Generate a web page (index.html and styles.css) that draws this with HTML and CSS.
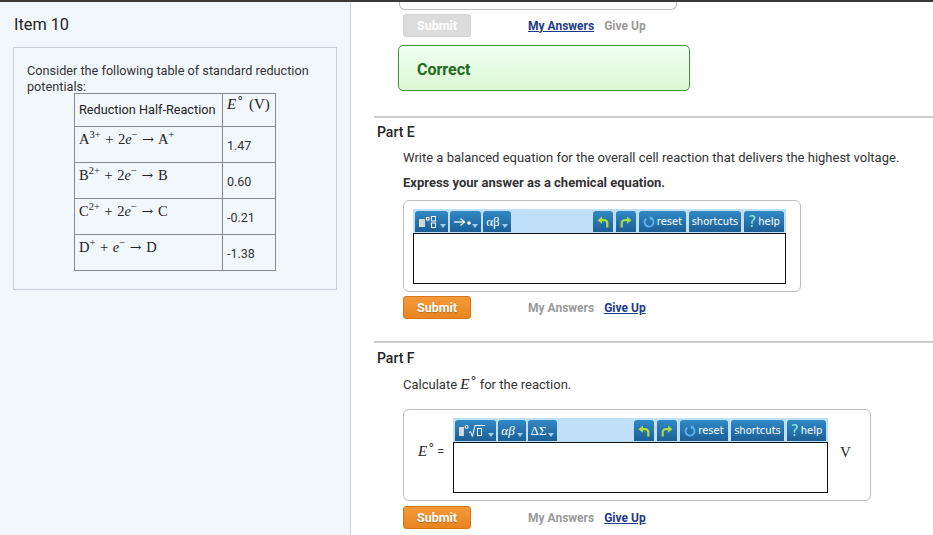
FILE: index.html
```html
<!DOCTYPE html>
<html lang="en">
<head>
  <meta charset="UTF-8">
  <title>Item 10</title>
  <link rel="stylesheet" href="styles.css">
</head>
<body>
  <div class="topbar"></div>
  <div class="page">
    <aside class="sidebar">
      <h1 class="item-title">Item 10</h1>
      <div class="intro">
        <p>Consider the following table of standard reduction potentials:</p>
        <table class="potentials">
          <tr class="head">
            <td>Reduction Half-Reaction</td>
            <td class="math"><i>E</i><sup class="deg">°</sup> (V)</td>
          </tr>
          <tr>
            <td class="math">A<sup>3+</sup> + 2<i>e</i><sup>−</sup> <span class="arr">→</span> A<sup>+</sup></td>
            <td class="val">1.47</td>
          </tr>
          <tr>
            <td class="math">B<sup>2+</sup> + 2<i>e</i><sup>−</sup> <span class="arr">→</span> B</td>
            <td class="val">0.60</td>
          </tr>
          <tr>
            <td class="math">C<sup>2+</sup> + 2<i>e</i><sup>−</sup> <span class="arr">→</span> C</td>
            <td class="val">-0.21</td>
          </tr>
          <tr>
            <td class="math">D<sup>+</sup> + <i>e</i><sup>−</sup> <span class="arr">→</span> D</td>
            <td class="val">-1.38</td>
          </tr>
        </table>
      </div>
    </aside>

    <main class="main">
      <div class="prev-box"></div>
      <div class="actions">
        <button class="submit disabled">Submit</button>
        <a class="link strong" href="#">My Answers</a>
        <span class="link muted">Give Up</span>
      </div>
      <div class="feedback">Correct</div>

      <section class="part">
        <h2>Part E</h2>
        <div class="part-body">
          <p class="prompt">Write a balanced equation for the overall cell reaction that delivers the highest voltage.</p>
          <p class="prompt bold">Express your answer as a chemical equation.</p>
          <div class="editor">
            <div class="field wide-e">
              <div class="toolbar">
                <div class="tb-group">
                  <span class="tb-btn w33">
                    <svg width="20" height="14" viewBox="0 0 20 14"><rect x="1" y="4" width="6" height="8" fill="#d6d6d6"/><rect x="8.5" y="2.5" width="2.5" height="2.5" fill="none" stroke="#fff"/><rect x="13.5" y="1.5" width="4" height="4.5" fill="none" stroke="#fff"/><rect x="13.5" y="8" width="4" height="4.5" fill="none" stroke="#fff"/></svg>
                    <span class="caret"></span>
                  </span>
                  <span class="tb-btn w31">
                    <svg width="20" height="12" viewBox="0 0 20 12"><path d="M1 6H11" stroke="#fff" stroke-width="1.3"/><path d="M7.5 2.5L11.5 6L7.5 9.5" fill="none" stroke="#fff" stroke-width="1.3"/><circle cx="16" cy="7" r="1.8" fill="#fff"/></svg>
                    <span class="caret"></span>
                  </span>
                  <span class="tb-btn w28"><span class="greek">αβ</span><span class="caret"></span></span>
                </div>
                <div class="tb-group">
                  <span class="tb-btn w20">
                    <svg width="12" height="12" viewBox="0 0 12 12"><path d="M4 4.2H7.3A3 3 0 0 1 10.3 7.2V11.5" fill="none" stroke="#b8dc3a" stroke-width="2.2"/><path d="M0.5 4.2L5 0.6V7.8Z" fill="#b8dc3a"/></svg>
                  </span>
                  <span class="tb-btn w20">
                    <svg width="12" height="12" viewBox="0 0 12 12"><g transform="translate(12 0) scale(-1 1)"><path d="M4 4.2H7.3A3 3 0 0 1 10.3 7.2V11.5" fill="none" stroke="#a6d84a" stroke-width="2.2"/><path d="M0.5 4.2L5 0.6V7.8Z" fill="#a6d84a"/></g></svg>
                  </span>
                  <span class="tb-btn w47">
                    <svg width="12" height="12" viewBox="0 0 12 12"><path d="M3.2 2.6A4.5 4.5 0 1 0 8.6 2.4" fill="none" stroke="#5cb4f4" stroke-width="1.8"/><path d="M6.4 0.3L10.2 1.6L7.4 4.8Z" fill="#5cb4f4"/></svg>
                    <span>reset</span>
                  </span>
                  <span class="tb-btn w52"><span>shortcuts</span></span>
                  <span class="tb-btn w40"><span class="qmark">?</span><span>help</span></span>
                </div>
              </div>
              <div class="input"></div>
            </div>
          </div>
          <div class="actions">
            <button class="submit">Submit</button>
            <span class="link muted">My Answers</span>
            <a class="link strong" href="#">Give Up</a>
          </div>
        </div>
      </section>

      <section class="part">
        <h2>Part F</h2>
        <div class="part-body">
          <p class="prompt">Calculate <span class="math"><i>E</i><sup class="deg">°</sup></span> for the reaction.</p>
          <div class="editor row">
            <div class="eq-label"><span class="math"><i>E</i><sup class="deg">°</sup></span> =</div>
            <div class="field wide-f">
              <div class="toolbar">
                <div class="tb-group">
                  <span class="tb-btn w41">
                    <svg width="28" height="14" viewBox="0 0 28 14"><rect x="1" y="3" width="5" height="9" fill="#d6d6d6"/><circle cx="8.6" cy="3" r="1.5" fill="none" stroke="#fff" stroke-width="1"/><path d="M11 8.5L12.6 7.6L14.4 12.5L17 1.5H27" fill="none" stroke="#fff" stroke-width="1"/><rect x="19.5" y="4.5" width="4" height="7" fill="none" stroke="#fff"/></svg>
                    <span class="caret"></span>
                  </span>
                  <span class="tb-btn w28"><span class="greek it">αβ</span><span class="caret"></span></span>
                  <span class="tb-btn w29"><span class="greek">ΔΣ</span><span class="caret"></span></span>
                </div>
                <div class="tb-group">
                  <span class="tb-btn w20">
                    <svg width="12" height="12" viewBox="0 0 12 12"><path d="M4 4.2H7.3A3 3 0 0 1 10.3 7.2V11.5" fill="none" stroke="#b8dc3a" stroke-width="2.2"/><path d="M0.5 4.2L5 0.6V7.8Z" fill="#b8dc3a"/></svg>
                  </span>
                  <span class="tb-btn w20">
                    <svg width="12" height="12" viewBox="0 0 12 12"><g transform="translate(12 0) scale(-1 1)"><path d="M4 4.2H7.3A3 3 0 0 1 10.3 7.2V11.5" fill="none" stroke="#a6d84a" stroke-width="2.2"/><path d="M0.5 4.2L5 0.6V7.8Z" fill="#a6d84a"/></g></svg>
                  </span>
                  <span class="tb-btn w48">
                    <svg width="12" height="12" viewBox="0 0 12 12"><path d="M3.2 2.6A4.5 4.5 0 1 0 8.6 2.4" fill="none" stroke="#5cb4f4" stroke-width="1.8"/><path d="M6.4 0.3L10.2 1.6L7.4 4.8Z" fill="#5cb4f4"/></svg>
                    <span>reset</span>
                  </span>
                  <span class="tb-btn w53"><span>shortcuts</span></span>
                  <span class="tb-btn w39"><span class="qmark">?</span><span>help</span></span>
                </div>
              </div>
              <div class="input"></div>
            </div>
            <div class="unit math">V</div>
          </div>
          <div class="actions">
            <button class="submit">Submit</button>
            <span class="link muted">My Answers</span>
            <a class="link strong" href="#">Give Up</a>
          </div>
        </div>
      </section>
    </main>
  </div>
</body>
</html>
```

FILE: styles.css
```css
* {
  margin: 0;
  padding: 0;
  box-sizing: border-box;
}

body {
  width: 933px;
  height: 535px;
  overflow: hidden;
  background: #fff;
  font-family: Roboto, 'Liberation Sans', Arial, sans-serif;
  color: #333;
}

.topbar {
  height: 2px;
  background: #3a3a3a;
}

.page {
  display: flex;
  height: 533px;
}

/* left column */

.sidebar {
  width: 351px;
  flex: none;
  background: #f2f7fc;
  border-right: 1px solid #c9d5e1;
}

.item-title {
  margin: 13px 0 0 14px;
  font-size: 16.3px;
  line-height: 20px;
  font-weight: 400;
  color: #222;
}

.intro {
  width: 324px;
  margin: 12px 0 0 13px;
  padding: 15px 13px 18px;
  border: 1px solid #c7d0da;
  font-size: 12.7px;
  line-height: 15.5px;
}

.potentials {
  margin: -1px auto 0;
  border-collapse: collapse;
  border: 1px solid #222;
  background: #f2f7fc;
}

.potentials td {
  border: 1px solid #8a8a8a;
  height: 36px;
  padding: 0 4px;
  vertical-align: top;
}

.potentials td:first-child {
  width: 148px;
}

.potentials td:last-child {
  width: 53px;
}

.potentials .head td {
  height: 33px;
  vertical-align: middle;
  font-size: 12.7px;
  color: #222;
}

.potentials .head td.math {
  vertical-align: top;
  padding-top: 3px;
  font-size: 15px;
  word-spacing: 2px;
}

.math {
  font-family: 'Liberation Serif', 'DejaVu Serif', serif;
  font-size: 14px;
  color: #222;
}

.potentials td.math {
  padding-top: 5px;
  font-size: 14.5px;
  word-spacing: 1px;
}

.math sup {
  font-size: 10.5px;
  line-height: 0;
  vertical-align: 6px;
}

.math sup.deg {
  font-family: 'DejaVu Sans', sans-serif;
  font-size: 12px;
  vertical-align: 4px;
  margin-left: 1px;
}

.arr {
  font-family: 'DejaVu Serif', serif;
  font-size: 14px;
}

.potentials td.val {
  padding-top: 11px;
  font-size: 12.5px;
  color: #333;
}

/* right column */

.main {
  flex: 1;
  padding-left: 23px;
}

.prev-box {
  width: 278px;
  height: 8px;
  margin-left: 25px;
  border: 1px solid #bdbdbd;
  border-top: none;
  border-radius: 0 0 6px 6px;
}

.actions {
  display: flex;
  align-items: center;
  margin: 4px 0 0 29px;
  height: 23px;
}

.part-body .actions {
  margin-left: 0;
}

.submit {
  width: 68px;
  height: 23px;
  border: 1px solid #d7751b;
  border-radius: 3px;
  background: linear-gradient(#f49a38, #ea8520);
  color: #fff;
  font-family: Roboto, 'Liberation Sans', sans-serif;
  font-size: 12.5px;
  font-weight: 700;
  text-shadow: 0 1px 1px rgba(0,0,0,0.25);
}

.submit.disabled {
  background: #dcdcdc;
  border-color: #d2d2d2;
  text-shadow: none;
}

.link {
  font-size: 12px;
  font-weight: 700;
  text-decoration: none;
}

.link.strong {
  color: #1d3a8c;
  text-decoration: underline;
}

.link.muted {
  color: #9a9a9a;
}

.actions .link:nth-child(2) {
  margin-left: 57px;
}

.actions .link:nth-child(3) {
  margin-left: 10px;
}

.feedback {
  width: 292px;
  height: 46px;
  margin: 8px 0 0 24px;
  padding-left: 18px;
  border: 1px solid #43953a;
  border-radius: 5px;
  background: linear-gradient(#effff0, #dcf7d3);
  color: #1f6a1f;
  font-size: 16px;
  font-weight: 700;
  line-height: 47px;
}

.part {
  margin-top: 22px;
  border-top: 2px solid #cccccc;
}

.feedback + .part {
  margin-top: 25px;
}

.part h2 {
  margin: 5px 0 0 3px;
  font-size: 14px;
  line-height: 18px;
  font-weight: 500;
  color: #222;
}

.part + .part h2 {
  margin-top: 6px;
}

.part-body {
  padding-left: 29px;
}

.prompt {
  margin-top: 8px;
  height: 18px;
  font-size: 13px;
  line-height: 18px;
  color: #333;
}

.part + .part .prompt {
  margin-top: 9px;
}

.prompt + .prompt {
  margin-top: 7px;
}

.prompt.bold {
  font-weight: 700;
  color: #333;
}

.prompt .math,
.eq-label .math {
  font-size: 15px;
  line-height: 14px;
}

.editor {
  margin-top: 8px;
  padding: 8px 0 7px 9px;
  border: 1px solid #bfbfbf;
  border-radius: 6px;
}

.part-body .editor {
  width: 398px;
}

.editor.row {
  display: flex;
  width: 468px;
  margin-top: 15px;
  padding-left: 0;
}

.editor.row + .actions {
  margin-top: 5px;
}

.eq-label {
  width: 49px;
  padding: 25px 0 0 14px;
  font-size: 12.5px;
  line-height: 18px;
}

.unit {
  margin-left: 12px;
  padding-top: 25px;
  font-size: 15px;
  line-height: 18px;
}

.wide-e {
  width: 373px;
}

.wide-f {
  width: 375px;
}

.toolbar {
  display: flex;
  justify-content: space-between;
  align-items: flex-end;
  height: 24px;
  padding: 0 2px 1px;
  background: #bfe0f8;
}

.tb-group {
  display: flex;
  gap: 2px;
}

.tb-group + .tb-group {
  gap: 3px;
}

.tb-btn {
  display: flex;
  align-items: center;
  justify-content: center;
  gap: 2px;
  height: 21px;
  border-radius: 3px 3px 0 0;
  background: linear-gradient(#3189c6, #1b5f95);
  color: #fff;
  font-family: 'DejaVu Sans', Verdana, sans-serif;
  font-size: 10px;
}

.w20 { width: 20px; }
.w28 { width: 28px; }
.w29 { width: 29px; }
.w31 { width: 31px; }
.w33 { width: 33px; }
.w39 { width: 39px; }
.w40 { width: 40px; }
.w41 { width: 41px; }
.w47 { width: 47px; }
.w48 { width: 48px; }
.w52 { width: 52px; }
.w53 { width: 53px; }

.caret {
  align-self: flex-end;
  margin-bottom: 4px;
  border-left: 3px solid transparent;
  border-right: 3px solid transparent;
  border-top: 4px solid #9fd0f5;
}

.w31 .caret {
  margin-left: -3px;
}

.greek {
  font-family: 'Liberation Serif', 'DejaVu Serif', serif;
  font-size: 13px;
}

.greek.it {
  font-style: italic;
}

.qmark {
  color: #8ee6cf;
  font-size: 15px;
}

.input {
  height: 51px;
  border: 1px solid #111;
  background: #fff;
}
```
